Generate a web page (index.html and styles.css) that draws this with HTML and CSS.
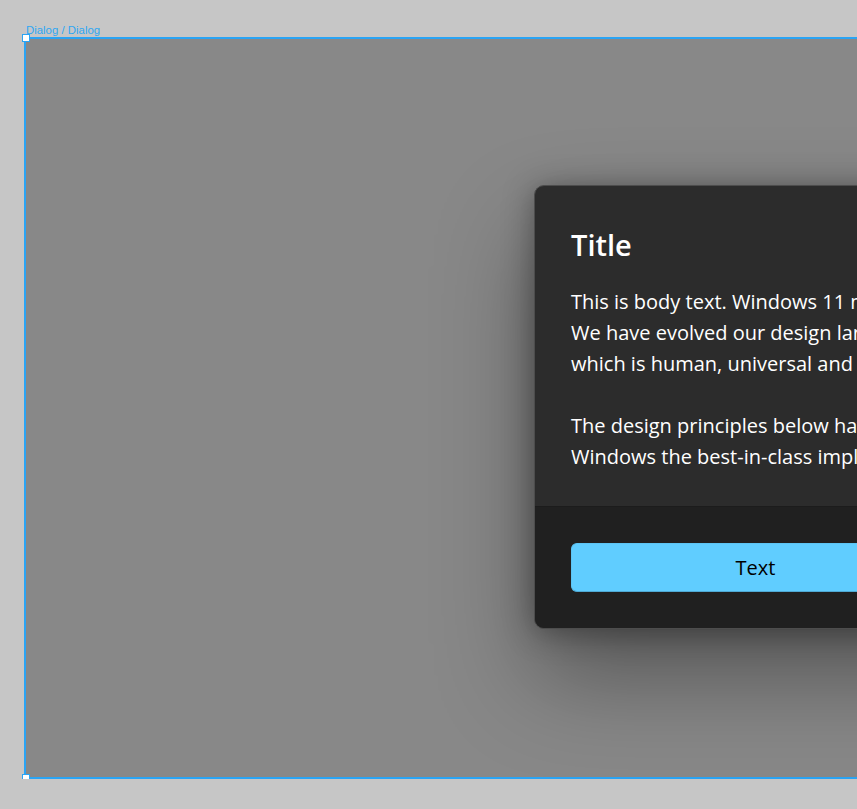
FILE: index.html
```html
<!DOCTYPE html>
<html lang="en">
<head>
<meta charset="UTF-8">
<meta name="viewport" content="width=device-width, initial-scale=1.0">
<title>Dialog</title>
<link rel="stylesheet" href="styles.css">
</head>
<body>
<div class="canvas">
    <div class="frame-label">Dialog / Dialog</div>
    <div class="frame">
        <span class="handle handle-tl"></span>
        <span class="handle handle-bl"></span>
        <div class="dialog">
            <div class="dialog-content">
                <h2>Title</h2>
                <p>This is body text. Windows 11 marks a visual evolution of the operating system.<br>
                We have evolved our design language alongside with Fluent to create a design<br>
                which is human, universal and truly feels like Windows.</p>
                <p>The design principles below have guided us throughout the journey of making<br>
                Windows the best-in-class implementation of Fluent.</p>
            </div>
            <div class="dialog-footer">
                <button class="btn-primary">Text</button>
                <button class="btn-secondary">Text</button>
            </div>
        </div>
    </div>
</div>
</body>
</html>
```

FILE: styles.css
```css
html, body {
    margin: 0;
    overflow: hidden;
}
body {
    background-color: #c6c6c6;
    font-family: "Open Sans", "Noto Sans", sans-serif;
}
.canvas {
    padding: 23px 0 0 24px;
    width: 1200px;
}
.frame-label {
    font-family: "Liberation Sans", Arial, sans-serif;
    font-size: 11.4px;
    line-height: 14px;
    color: #2ea6f2;
    padding-left: 2px;
}
.frame {
    position: relative;
    box-sizing: border-box;
    height: 742px;
    border: 2px solid #2aa4f4;
    background-color: #888888;
    padding: 146px 0 0 508px;
}
.handle {
    position: absolute;
    width: 6px;
    height: 6px;
    background-color: #ffffff;
    border: 1px solid #2aa4f4;
}
.handle-tl {
    left: -4px;
    top: -5px;
}
.handle-bl {
    left: -4px;
    bottom: -5px;
}
.dialog {
    width: 822px;
    background-color: #2c2c2c;
    border: 1px solid #4d4d4d;
    border-radius: 10px;
    overflow: hidden;
    box-shadow: 0 48px 96px rgba(0, 0, 0, 0.37), 0 3px 31px rgba(0, 0, 0, 0.37);
}
.dialog-content {
    padding: 38px 36px 34px;
    color: #ffffff;
}
.dialog-content h2 {
    margin: 0 0 20px;
    font-size: 29px;
    line-height: 42px;
    font-weight: 600;
}
.dialog-content p {
    margin: 0 0 31px;
    font-size: 20px;
    line-height: 31px;
    white-space: nowrap;
}
.dialog-content p:last-child {
    margin-bottom: 0;
}
.dialog-footer {
    display: flex;
    gap: 12px;
    padding: 36px;
    background-color: #202020;
    border-top: 1px solid #1c1c1c;
}
.dialog-footer button {
    flex: 1;
    height: 49px;
    font-family: inherit;
    font-size: 20px;
    border-radius: 6px;
}
.btn-primary {
    background-color: #60cdff;
    color: #000000;
    border: 1px solid #5cc4f4;
    border-bottom-color: #4fa9d4;
}
.btn-secondary {
    background-color: #373737;
    color: #ffffff;
    border: 1px solid #444444;
}
```
